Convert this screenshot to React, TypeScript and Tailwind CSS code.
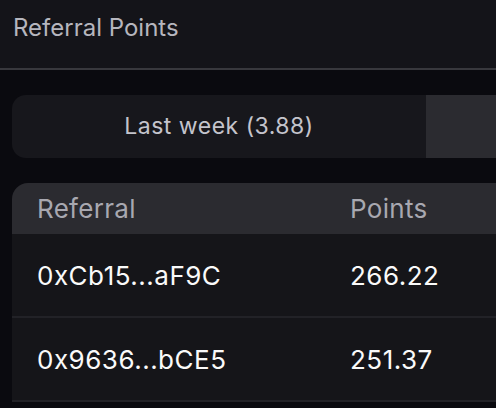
export default function App() {
  const rows = [
    { addr: '0xCb15...aF9C', pts: '266.22' },
    { addr: '0x9636...bCE5', pts: '251.37' },
  ];

  return (
    <div className="w-[496px] h-[408px] overflow-hidden bg-[#0a0a0f] font-['Inter',sans-serif]">
      {/* Top bar */}
      <div className="h-[70px] bg-[#141419] border-b-2 border-[#38383d] pl-[13px] pt-[12px]">
        <h1 className="text-[24px] leading-[32px] text-[#b6b6be]">Referral Points</h1>
      </div>

      <div className="w-[720px] pl-3 pt-[25px]">
        {/* Period tabs */}
        <div className="flex h-[63px]">
          <div className="w-[414px] rounded-l-[14px] bg-[#17171c] flex items-center justify-center">
            <span className="text-[23px] tracking-[0.5px] text-[#c4c4cc]">Last week (3.88)</span>
          </div>
          <div className="flex-1 bg-[#2b2b30]" />
        </div>

        {/* Referral table */}
        <div className="mt-[25px] rounded-t-[16px] overflow-hidden">
          <div className="flex items-center h-[51px] bg-[#2b2b30] text-[26px] tracking-[0.3px] text-[#a8a8b0]">
            <span className="w-[338px] pl-[25px]">Referral</span>
            <span>Points</span>
          </div>
          {rows.map((r) => (
            <div key={r.addr} className="flex items-center h-[84px] bg-[#151519] border-b-2 border-[#222227] text-[26px] tracking-[0.5px] text-[#fafafa]">
              <span className="w-[338px] pl-[25px]">{r.addr}</span>
              <span>{r.pts}</span>
            </div>
          ))}
        </div>
      </div>
    </div>
  );
}
